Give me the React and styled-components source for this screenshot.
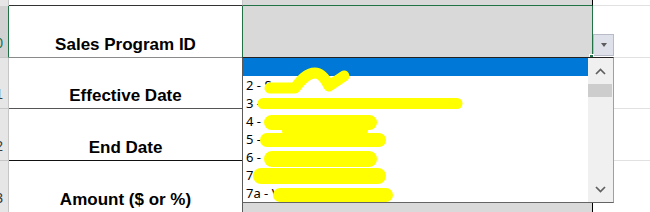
import React from 'react';
import styled, { createGlobalStyle } from 'styled-components';

const GlobalStyle = createGlobalStyle`
  html, body { margin: 0; padding: 0; background: #ffffff; overflow: hidden; }
  #root { width: 650px; height: 212px; overflow: hidden; }
  * { box-sizing: border-box; }
`;

const Sheet = styled.div`
  position: relative;
  display: grid;
  grid-template-columns: 9px 234px 350px 1fr;
  grid-template-rows: 6px 52px 51px 52px 52px;
  width: 650px;
  font-family: "Liberation Sans", Arial, sans-serif;
`;

const RowHead = styled.div`
  display: flex;
  justify-content: flex-end;
  align-items: flex-end;
  overflow: hidden;
  white-space: nowrap;
  padding: 0 5px 6px 0;
  font-size: 14px;
  background: ${p => (p.$active ? '#d2d2d2' : '#e6e6e6')};
  color: ${p => (p.$active ? '#217346' : '#3a3a3a')};
  border-right: 1px solid ${p => (p.$active ? '#217346' : '#c6c6c6')};
  border-bottom: 1px solid #c6c6c6;
`;

const LabelCell = styled.div`
  display: flex;
  align-items: flex-end;
  justify-content: center;
  padding-bottom: 2px;
  font-size: 17px;
  font-weight: bold;
  color: #000;
  background: #fff;
  border-right: 1px solid ${p => p.$edge || '#d4d4d4'};
  border-bottom: 1px solid ${p => p.$line || '#d4d4d4'};
`;

const GrayCell = styled.div`
  background: #d9d9d9;
  border-right: 1px solid ${p => p.$edge || '#000'};
  border-bottom: 1px solid ${p => p.$line || '#d9d9d9'};
`;

const BlankCell = styled.div`
  background: #fff;
  border-bottom: 1px solid #e1e1e1;
`;

const DropButton = styled.div`
  position: absolute;
  left: 593px;
  top: 34px;
  width: 21px;
  height: 22px;
  background: #dfe1ea;
  border: 1px solid #b8bbc8;
  display: flex;
  align-items: center;
  justify-content: center;
  &::after {
    content: '';
    border-top: 4px solid #5c5c5c;
    border-left: 3.5px solid transparent;
    border-right: 3.5px solid transparent;
  }
`;

const FillHandle = styled.div`
  position: absolute;
  left: 589px;
  top: 54px;
  width: 5px;
  height: 5px;
  background: #217346;
  border: 1px solid #fff;
`;

const ListBox = styled.div`
  position: absolute;
  left: 242px;
  top: 57px;
  width: 372px;
  height: 146px;
  display: flex;
  background: #fff;
  border: 1px solid;
  border-color: #222 #a0a0a0 #646464 #5a5a5a;
`;

const Items = styled.div`
  flex: 1;
  display: flex;
  flex-direction: column;
  overflow: hidden;
`;

const Item = styled.div`
  height: 18px;
  flex: none;
  line-height: 18px;
  padding-left: 3px;
  font-family: "Noto Sans", "Open Sans", sans-serif;
  font-size: 13px;
  color: #000;
  white-space: nowrap;
  background: ${p => (p.$active ? '#0078d7' : 'transparent')};
`;

const Scroll = styled.div`
  width: 25px;
  background: #f0f0f0;
  display: flex;
  flex-direction: column;
`;

const ScrollBtn = styled.div`
  height: 26px;
  display: flex;
  align-items: center;
  justify-content: center;
`;

const Thumb = styled.div`
  height: 13px;
  margin-right: 1px;
  background: #cdcdcd;
`;

const Spacer = styled.div`
  flex: 1;
`;

const Scribbles = styled.svg`
  position: absolute;
  left: 0;
  top: 0;
  pointer-events: none;
`;

const Chevron = ({ up }) => (
  <svg width="11" height="7" viewBox="0 0 11 7">
    <polyline
      points={up ? '1,6 5.5,1.5 10,6' : '1,1 5.5,5.5 10,1'}
      fill="none"
      stroke="#606060"
      strokeWidth="1.7"
    />
  </svg>
);

const rows = [
  { head: '10', label: 'Sales Program ID', active: true },
  { head: '11', label: 'Effective Date', line: '#555' },
  { head: '12', label: 'End Date', line: '#111' },
  { head: '13', label: 'Amount ($ or %)' },
];

const entries = [
  '',
  '2 - S',
  '3 - Gr',
  '4 -',
  '5 -',
  '6 -',
  '7 - V',
  '7a - V',
];

// yellow marker strokes that redact the entries
const marks = [
  { d: 'M27 30 L52 30 C58 22 64 15 72 15 C78 15 82 20 86 28 L101 18', w: 11 },
  { d: 'M20 45.5 L214 45.5', w: 11 },
  { d: 'M28.5 64.5 L126.5 64.5', w: 15 },
  { d: 'M42 73 L122 73', w: 6 },
  { d: 'M24 82 L136 82', w: 14 },
  { d: 'M29 101 L126 101', w: 16 },
  { d: 'M18 118 L135 118', w: 16 },
  { d: 'M37 137 L143 137', w: 14 },
];

export default function App() {
  return (
    <>
      <GlobalStyle />
      <Sheet>
        <RowHead />
        <LabelCell $line="#333" $edge="#c8c8c8" />
        <GrayCell $edge="#000" $line="#217346" />
        <BlankCell />

        {rows.map(r => (
          <React.Fragment key={r.head}>
            <RowHead $active={r.active}>{r.head}</RowHead>
            <LabelCell
              $edge={r.active ? '#217346' : '#5a5a5a'}
              $line={r.line || (r.active ? '#8a8a8a' : '#fff')}
            >
              {r.label}
            </LabelCell>
            <GrayCell $edge={r.active ? '#217346' : '#000'} $line={r.active ? '#222' : undefined} />
            <BlankCell />
          </React.Fragment>
        ))}

        <DropButton />
        <FillHandle />

        <ListBox>
          <Items>
            {entries.map((t, i) => (
              <Item key={i} $active={i === 0}>{t}</Item>
            ))}
          </Items>
          <Scroll>
            <ScrollBtn><Chevron up /></ScrollBtn>
            <Thumb />
            <Spacer />
            <ScrollBtn><Chevron /></ScrollBtn>
          </Scroll>
          <Scribbles width="345" height="144">
            {marks.map((m, i) => (
              <path
                key={i}
                d={m.d}
                fill="none"
                stroke="#ffff00"
                strokeWidth={m.w}
                strokeLinecap="round"
                strokeLinejoin="round"
              />
            ))}
          </Scribbles>
        </ListBox>
      </Sheet>
    </>
  );
}
